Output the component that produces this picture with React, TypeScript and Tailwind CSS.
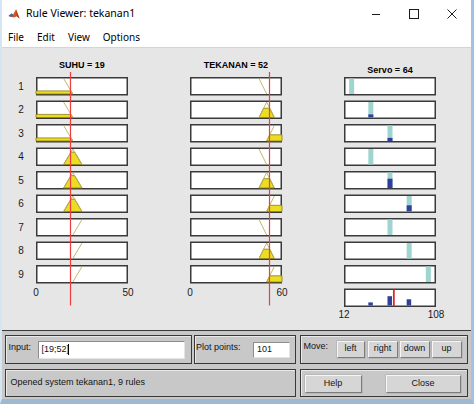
import React from "react";

type Pt = [number, number];
const W = 92;
const ROW = 23.5;
const BH = 18.5;

type InRow = { line: Pt[]; fill?: Pt[] };

const suhu: Record<string, InRow> = {
  dingin: {
    line: [[15, 1], [20, 0]],
    fill: [[0, 0], [0, 0.2], [19, 0.2], [20, 0]],
  },
  normal: {
    line: [[15, 0], [20, 1], [25, 0]],
    fill: [[15, 0], [19, 0.8], [21, 0.8], [25, 0]],
  },
  panas: { line: [[20, 0], [25, 1]] },
};

const tekanan: Record<string, InRow> = {
  rendah: { line: [[45, 1], [50, 0]] },
  sedang: {
    line: [[45, 0], [50, 1], [55, 0]],
    fill: [[45, 0], [48, 0.6], [52, 0.6], [55, 0]],
  },
  tinggi: {
    line: [[50, 0], [55, 1]],
    fill: [[50, 0], [52, 0.4], [60, 0.4], [60, 0]],
  },
};

const suhuRows = [
  suhu.dingin, suhu.dingin, suhu.dingin,
  suhu.normal, suhu.normal, suhu.normal,
  suhu.panas, suhu.panas, suhu.panas,
];
const tekananRows = [
  tekanan.rendah, tekanan.sedang, tekanan.tinggi,
  tekanan.rendah, tekanan.sedang, tekanan.tinggi,
  tekanan.rendah, tekanan.sedang, tekanan.tinggi,
];

function InputPlot({ max, rows, value }: { max: number; rows: InRow[]; value: number }) {
  const sx = (v: number) => (v / max) * W;
  const h = (rows.length - 1) * ROW + BH;
  const vx = Math.round(sx(value)) - 0.5;
  return (
    <svg width={W} height={h + 30} className="block overflow-visible">
      {rows.map((r, i) => {
        const top = i * ROW;
        const yTop = top + 1.5;
        const yBot = top + BH - 1.5;
        const sy = (m: number) => yBot - m * (yBot - yTop);
        const pts = (p: Pt[]) => p.map(([x, y]) => `${sx(x)},${sy(y)}`).join(" ");
        return (
          <g key={i}>
            <rect x={0.75} y={top + 0.75} width={W - 1.5} height={BH - 1.5} fill="#ffffff" stroke="#3a3a3a" strokeWidth={1.5} />
            {r.fill && <polygon points={pts(r.fill)} fill="#ecdc22" stroke="#8a7c14" strokeWidth={0.8} />}
            <polyline points={pts(r.line)} fill="none" stroke="#bcae5e" strokeWidth={0.9} />
          </g>
        );
      })}
      <line x1={vx} x2={vx} y1={-5} y2={h + 22} stroke="#f03c3c" strokeWidth={1.2} />
    </svg>
  );
}

function OutputPlot() {
  const sx = (v: number) => ((v - 12) / 96) * W;
  const rows = [
    { v: 20, d: 0 }, { v: 40, d: 0.2 }, { v: 60, d: 0.2 },
    { v: 40, d: 0 }, { v: 60, d: 0.6 }, { v: 80, d: 0.4 },
    { v: 60, d: 0 }, { v: 80, d: 0 }, { v: 100, d: 0 },
  ];
  const agg = [{ v: 40, d: 0.2 }, { v: 60, d: 0.6 }, { v: 80, d: 0.4 }];
  const h = 9 * ROW + BH;
  const box = (top: number, key: string) => (
    <rect key={key} x={0.75} y={top + 0.75} width={W - 1.5} height={BH - 1.5} fill="#ffffff" stroke="#3a3a3a" strokeWidth={1.5} />
  );
  const aTop = 9 * ROW;
  const aTopIn = aTop + 1.5;
  const aBot = aTop + BH - 1.5;
  return (
    <svg width={W} height={h} className="block">
      {rows.map((r, i) => {
        const top = i * ROW;
        const yTop = top + 1.5;
        const yBot = top + BH - 1.5;
        const H = yBot - yTop;
        const x = sx(r.v) - 2.5;
        return (
          <g key={i}>
            {box(top, "b" + i)}
            <rect x={x} y={yTop} width={5} height={H} fill="#9fd4d1" />
            {r.d > 0 && <rect x={x} y={yBot - r.d * H} width={5} height={r.d * H} fill="#2f3f9c" />}
          </g>
        );
      })}
      {box(aTop, "agg")}
      {agg.map((a, i) => {
        const H = aBot - aTopIn;
        return <rect key={i} x={sx(a.v) - 2.5} y={aBot - a.d * H} width={4.5} height={a.d * H} fill="#2f3f9c" />;
      })}
      <line x1={sx(64)} x2={sx(64)} y1={aTop + 1} y2={aTop + BH - 1} stroke="#e3262a" strokeWidth={1.8} />
    </svg>
  );
}

function InputColumn({
  title,
  max,
  rows,
  value,
  maxLabel,
}: {
  title: string;
  max: number;
  rows: InRow[];
  value: number;
  maxLabel: string;
}) {
  return (
    <div className="w-[92px] pt-[11px]">
      <div className="h-[12px] leading-[12px] text-center text-[9px] font-bold text-black whitespace-nowrap">{title}</div>
      <div className="mt-[6px] h-[207px]">
        <InputPlot max={max} rows={rows} value={value} />
      </div>
      <div className="mt-[3px] -mx-[10px] flex justify-between text-[10px] leading-[12px]">
        <span className="w-[20px] text-center">0</span>
        <span className="w-[20px] text-center">{maxLabel}</span>
      </div>
    </div>
  );
}

function OutputColumn() {
  return (
    <div className="w-[92px] pt-[16px]">
      <div className="h-[12px] leading-[12px] text-center text-[9px] font-bold text-black whitespace-nowrap">Servo = 64</div>
      <div className="mt-[1px]">
        <OutputPlot />
      </div>
      <div className="mt-[2px] -mx-[10px] flex justify-between text-[10px] leading-[12px]">
        <span className="w-[20px] text-center">12</span>
        <span className="w-[20px] text-center">108</span>
      </div>
    </div>
  );
}

function Btn({ w, children }: { w: string; children: React.ReactNode }) {
  return (
    <div
      className={
        "flex items-center justify-center bg-[#d6d6d6] border border-t-[#f6f6f6] border-l-[#f6f6f6] border-r-[#7c7c7c] border-b-[#7c7c7c] shadow-[0_0_0_0.5px_#a8a8a8] " +
        w
      }
    >
      {children}
    </div>
  );
}

const frame = "border-[1.5px] border-[#383838] shadow-[inset_1px_1px_0_#e9e9e9]";
const field = "bg-white border border-t-[#8c8c8c] border-l-[#8c8c8c] border-r-[#e4e4e4] border-b-[#e4e4e4] flex items-center pl-[3px] text-[9px]";

export default function App() {
  return (
    <div className="w-[474px] h-[404px] flex flex-col bg-white border-l-2 border-r-[3px] border-b-[5px] border-l-[#d6e5f2] border-r-[#a4c2de] border-b-[#9fb9d3] overflow-hidden">
      {/* Title bar */}
      <div className="h-[27px] flex items-center bg-white font-['Noto_Sans',sans-serif] text-black">
        <svg width="12" height="12" viewBox="0 0 12 12" className="ml-[6px]">
          <path d="M0.5 8 L3.5 5.5 L5.2 6.6 L8 1.2 L11.5 10.5 L8.8 8.3 L6.2 9.6 Z" fill="#d9541e" />
          <path d="M0.5 8 L3.5 5.5 L5.2 6.6 L4.2 9.2 Z" fill="#3d6fa6" />
          <path d="M8 1.2 L11.5 10.5 L8.8 8.3 Z" fill="#b33a12" />
        </svg>
        <span className="ml-[6px] text-[10.5px] leading-none">Rule Viewer: tekanan1</span>
        <div className="ml-auto flex h-full">
          <div className="w-[38px] h-full flex items-center justify-center">
            <svg width="10" height="10" viewBox="0 0 10 10">
              <line x1="1" y1="5.5" x2="9" y2="5.5" stroke="#1a1a1a" strokeWidth="1" />
            </svg>
          </div>
          <div className="w-[38px] h-full flex items-center justify-center">
            <svg width="10" height="10" viewBox="0 0 10 10">
              <rect x="0.5" y="0.5" width="9" height="9" fill="none" stroke="#1a1a1a" strokeWidth="1" />
            </svg>
          </div>
          <div className="w-[38px] h-full flex items-center justify-center">
            <svg width="10" height="10" viewBox="0 0 10 10">
              <path d="M0.5 0.5 L9.5 9.5 M9.5 0.5 L0.5 9.5" stroke="#1a1a1a" strokeWidth="1" />
            </svg>
          </div>
        </div>
      </div>

      {/* Menu bar */}
      <div className="h-[20px] flex items-center gap-[13px] pl-[6px] bg-white font-['Noto_Sans',sans-serif] text-[10px] text-black">
        <span>File</span>
        <span>Edit</span>
        <span>View</span>
        <span>Options</span>
      </div>
      <div className="h-px bg-[#d5d5d5]" />

      {/* Plot area */}
      <div className="h-[282px] bg-[#e6e6e6] flex font-['Liberation_Sans',sans-serif] text-[#1a1a1a]">
        <div className="w-[34px] shrink-0 pt-[29px] flex flex-col gap-[5px]">
          {[1, 2, 3, 4, 5, 6, 7, 8, 9].map((n) => (
            <div key={n} className="h-[18.5px] flex items-center justify-center pl-[4px] text-[10px]">
              {n}
            </div>
          ))}
        </div>
        <div className="flex gap-[62px]">
          <InputColumn title="SUHU = 19" max={50} rows={suhuRows} value={19} maxLabel="50" />
          <InputColumn title="TEKANAN = 52" max={60} rows={tekananRows} value={52} maxLabel="60" />
          <OutputColumn />
        </div>
      </div>

      {/* Bottom panel */}
      <div className="h-[69px] bg-[#c8c8c8] border-t border-[#3a3a3a] pt-[4px] pl-[3px] flex flex-col gap-[5px] font-['Liberation_Sans',sans-serif] text-[9px] text-[#141414]">
        <div className="flex h-[29px]">
          <div className={"w-[187px] flex items-start pt-[4.5px] pl-[2.5px] " + frame}>
            <span className="w-[29px] leading-[12px]">Input:</span>
            <div className={"w-[147px] h-[18px] " + field}>
              <span>[19;52]</span>
              <span className="w-px h-[11px] bg-black -ml-[1px]" />
            </div>
          </div>
          <div className={"ml-[2px] w-[102px] flex items-start pt-[5.5px] pl-[1px] " + frame}>
            <span className="w-[57px] leading-[12px] -mt-[0.5px]">Plot points:</span>
            <div className={"w-[37px] h-[16px] " + field}>101</div>
          </div>
          <div className={"ml-[4px] w-[168px] flex items-start pt-[4.5px] pl-[2.5px] " + frame}>
            <span className="w-[33px] leading-[12px] -mt-[0.5px]">Move:</span>
            <Btn w="w-[28px] h-[17px]">left</Btn>
            <div className="ml-[3px]">
              <Btn w="w-[30px] h-[17px]">right</Btn>
            </div>
            <div className="ml-[2px]">
              <Btn w="w-[30px] h-[17px]">down</Btn>
            </div>
            <div className="ml-[2px]">
              <Btn w="w-[30px] h-[17px]">up</Btn>
            </div>
          </div>
        </div>
        <div className="flex h-[28px]">
          <div className={"w-[291px] flex items-center pl-[4.5px] " + frame}>
            <span>Opened system tekanan1, 9 rules</span>
          </div>
          <div className={"ml-[4px] w-[168px] flex items-start pt-[4.5px] pl-[3.5px] " + frame}>
            <Btn w="w-[57px] h-[18px]">Help</Btn>
            <div className="ml-[24px]">
              <Btn w="w-[75px] h-[18px]">Close</Btn>
            </div>
          </div>
        </div>
      </div>
    </div>
  );
}
